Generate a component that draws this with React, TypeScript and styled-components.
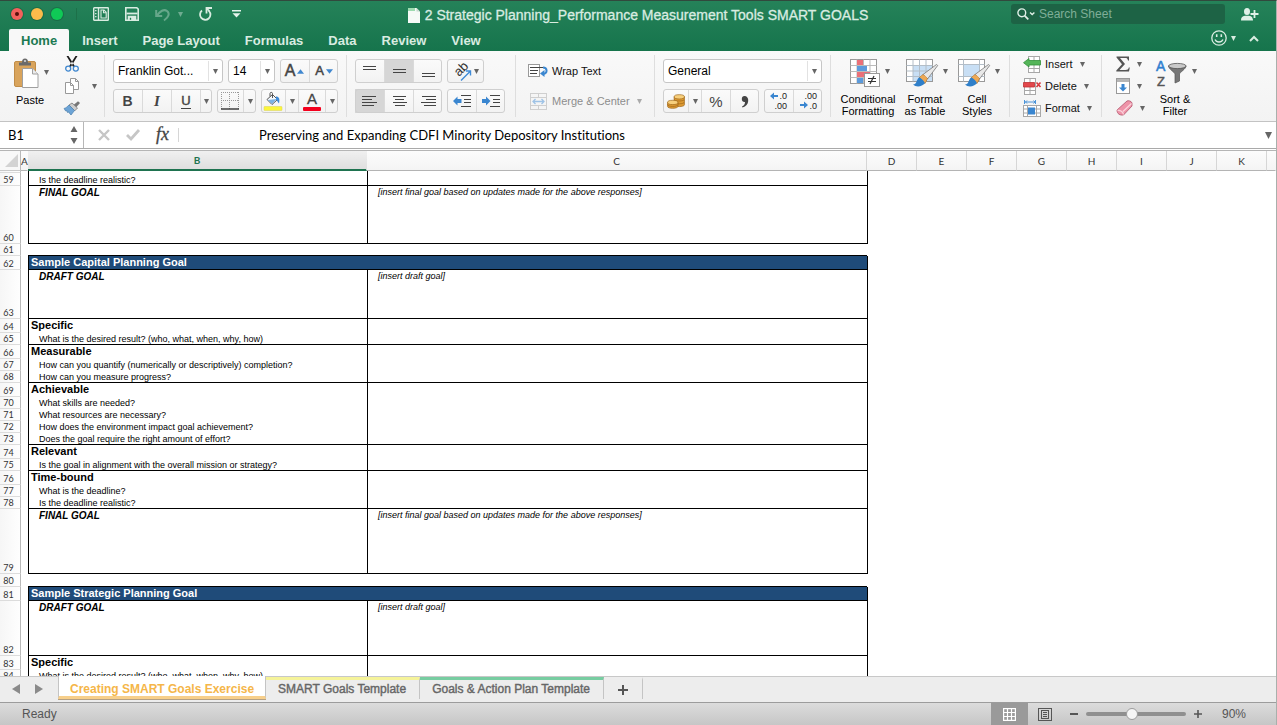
import React from "react";
import styled, { createGlobalStyle, css } from "styled-components";

const GlobalStyle = createGlobalStyle`
  *, *::before, *::after { box-sizing: border-box; }
  html, body { margin: 0; padding: 0; overflow: hidden; }
  body { font-family: "Liberation Sans", Arial, sans-serif; font-size: 12px; color: #000; }
  button, input, select { font: inherit; color: inherit; margin: 0; padding: 0; border: 0; background: none; border-radius: 0; outline: none; }
  svg { display: block; flex: none; overflow: visible; }
`;

const Window = styled.div`
  display: flex;
  flex-direction: column;
  height: 100vh;
  border-top: 1px solid #31493d;
  border-right: 1px solid #a9b0ac;
  background: #fff;
`;

/* ---------- title bar ---------- */
const Header = styled.header`
  flex: none;
  background: linear-gradient(#258259, #16744c);
  color: #d9ece1;
`;
const TitleRow = styled.div`
  display: grid;
  grid-template-columns: 1fr auto 1fr;
  align-items: center;
  height: 26px;
`;
const QuickBar = styled.div`
  display: flex;
  align-items: center;
  padding-left: 11px;
`;
const Lights = styled.div`
  display: flex;
  gap: 8px;
  padding-right: 13px;
  margin-right: 16px;
  border-right: 1px solid #1d7049;
`;
const Light = styled.button<{ $color: string }>`
  display: grid;
  place-items: center;
  width: 12px;
  height: 12px;
  border-radius: 50%;
  background: ${(p) => p.$color};
  box-shadow: 0 0 0 1px rgba(0, 60, 30, 0.25);
`;
const QuickButton = styled.button<{ $gap?: number; $dim?: boolean }>`
  display: flex;
  align-items: center;
  gap: 8px;
  margin-right: ${(p) => p.$gap ?? 16}px;
  opacity: ${(p) => (p.$dim ? 0.35 : 1)};
`;
const Title = styled.h1`
  display: flex;
  align-items: center;
  gap: 5px;
  margin: 0;
  padding-top: 2px;
  font-size: 14px;
  line-height: 20px;
  font-weight: 500;
  -webkit-text-stroke: 0.3px currentColor;
  white-space: nowrap;
`;
const TitleEnd = styled.div`
  display: flex;
  align-items: center;
  justify-content: flex-end;
  gap: 16px;
  padding-right: 17px;
`;
const Search = styled.label`
  display: flex;
  align-items: center;
  gap: 4px;
  width: 214px;
  height: 20px;
  padding-left: 6px;
  border-radius: 3px;
  background: #1d6345;
  input { flex: 1; min-width: 0; font-size: 12px; }
  input::placeholder { color: #7fae98; opacity: 1; }
`;
const TabRow = styled.nav`
  display: flex;
  align-items: center;
  justify-content: space-between;
  height: 24px;
  padding: 2px 17px 0 9px;
`;
const TabList = styled.div`
  display: flex;
  gap: 1px;
`;
const RibbonTab = styled.button<{ $active?: boolean }>`
  height: 22px;
  padding: 0 12px;
  font-size: 13px;
  line-height: 23px;
  font-weight: 700;
  ${(p) => p.$active && css`background: #f8f8f8; color: #1c7a52; border-radius: 2px 2px 0 0;`}
`;
const TabEnd = styled.div`
  display: flex;
  align-items: center;
  gap: 13px;
  padding-bottom: 4px;
  button { display: flex; align-items: center; gap: 4px; }
`;

/* ---------- ribbon ---------- */
const Ribbon = styled.section`
  flex: none;
  display: flex;
  height: 71px;
  padding: 4px 0;
  background: linear-gradient(#f9f9f9, #f3f3f3);
  border-bottom: 1px solid #c3c3c3;
`;
const Group = styled.div<{ $w: number; $pad?: number }>`
  display: flex;
  flex: none;
  width: ${(p) => p.$w}px;
  padding-left: ${(p) => p.$pad ?? 8}px;
  border-right: 1px solid #dedede;
  &:last-child { border-right: 0; }
`;
const Rows = styled.div`
  display: flex;
  flex-direction: column;
  justify-content: center;
  gap: 6px;
`;
const Line = styled.div`
  display: flex;
  gap: 5px;
`;
const Stack = styled.div<{ $w?: number }>`
  display: flex;
  flex-direction: column;
  justify-content: space-between;
  width: ${(p) => (p.$w ? `${p.$w}px` : "auto")};
`;
const IconButton = styled.button<{ $off?: boolean }>`
  display: flex;
  align-items: center;
  gap: 4px;
  height: 18px;
  font-size: 11px;
  line-height: 18px;
  white-space: nowrap;
  color: ${(p) => (p.$off ? "#8d8d8d" : "#111")};
  svg:last-child:not(:first-child) { margin-left: 3px; }
`;
const WideButton = styled(IconButton)`
  height: 24px;
`;
const PadIcon = styled.span<{ $w?: number }>`
  display: flex;
  justify-content: center;
  width: ${(p) => p.$w ?? 16}px;
`;
const BigButton = styled.button<{ $w: number }>`
  display: flex;
  flex-direction: column;
  align-items: center;
  justify-content: flex-start;
  width: ${(p) => p.$w}px;
  padding-top: 1px;
  font-size: 11px;
  line-height: 12px;
  white-space: pre-line;
  text-align: center;
`;
const BigArt = styled.span`
  display: flex;
  align-items: flex-end;
  gap: 5px;
  height: 32px;
  margin: 0 0 6px 3px;
  svg:last-child { align-self: center; }
`;
const Segments = styled.div`
  display: flex;
  height: 24px;
  outline: 1px solid #cfcfcf;
  outline-offset: -1px;
  border-radius: 3px;
  background: linear-gradient(#fbfbfb, #f2f2f2);
`;
const Segment = styled.button<{ $w?: number; $on?: boolean }>`
  display: flex;
  align-items: center;
  justify-content: center;
  gap: 2px;
  width: ${(p) => p.$w ?? 29}px;
  font-size: 14px;
  color: #444;
  background: ${(p) => (p.$on ? "#d6d6d6" : "transparent")};
  & + & { border-left: 1px solid #dadada; }
`;
const PickerBox = styled.div<{ $w: number }>`
  display: flex;
  align-items: center;
  width: ${(p) => p.$w}px;
  height: 24px;
  padding-right: 4px;
  border: 1px solid #c6c6c6;
  border-radius: 3px;
  background: #fff;
  select {
    flex: 1;
    min-width: 0;
    height: 20px;
    margin-right: 4px;
    padding-left: 4px;
    appearance: none;
    border-right: 1px solid #e2e2e2;
  }
`;
const PercentText = styled.span`
  font-size: 15px;
`;

/* ---------- formula bar ---------- */
const FormulaBar = styled.section`
  flex: none;
  display: flex;
  align-items: center;
  height: 27px;
  border-bottom: 1px solid #a9a9a9;
  font-family: Lato, "Liberation Sans", sans-serif;
  font-variant-ligatures: none;
`;
const NameBox = styled.div`
  display: flex;
  align-items: center;
  width: 84px;
  height: 100%;
  padding: 0 5px 0 8px;
  border-right: 1px solid #b7b7b7;
  input { flex: 1; min-width: 0; font-size: 13px; }
`;
const FormulaButtons = styled.div`
  display: flex;
  align-items: center;
  gap: 16px;
  width: 95px;
  height: 14px;
  padding-left: 14px;
  border-right: 1px solid #d6d6d6;
`;
const Fx = styled.span`
  font: italic 18px/14px "Liberation Serif", serif;
  color: #444;
  -webkit-text-stroke: 0.3px #444;
`;
const FormulaInput = styled.input`
  flex: 1;
  min-width: 0;
  height: 24px;
  padding: 0 0 1px 80px !important;
  font-size: 13px !important;
  font-variant-ligatures: none;
`;
const Expand = styled.button`
  padding: 0 4px 0 0 !important;
`;

/* ---------- sheet ---------- */
const SheetArea = styled.main`
  flex: 1;
  min-height: 0;
  overflow: hidden;
  border-top: 1px solid #b5b5b5;
  margin-top: 1px;
`;
const Sheet = styled.table`
  width: 100%;
  table-layout: fixed;
  border-collapse: separate;
  border-spacing: 0;
  th, td { padding: 0; }
`;
const ColHead = styled.th<{ $selected?: boolean; $tick?: boolean }>`
  height: 20px;
  font: 400 10px/18px Lato, "Liberation Sans", sans-serif;
  color: #333;
  background: linear-gradient(#fcfcfc, #f4f4f4);
  border-bottom: 1px solid #b4b4b4;
  border-right: 1px solid ${(p) => (p.$tick ? "#d6d6d6" : "transparent")};
  ${(p) => p.$selected && css`
    background: linear-gradient(#f0f0f0, #dfdfdf);
    border-bottom: 2px solid #1f7350;
    color: #1f7350;
    font-weight: 700;
  `}
`;
const Corner = styled.th`
  background: #f8f8f8;
  border-right: 1px solid #b9b9b9;
  border-bottom: 1px solid #c9c9c9;
  svg { margin-left: auto; margin-right: 2px; }
`;
const Row = styled.tr<{ $h: number }>`
  height: ${(p) => p.$h}px;
`;
const RowHead = styled.th`
  vertical-align: bottom;
  font: 400 9px/10px Lato, "Liberation Sans", sans-serif;
  color: #333;
  background: linear-gradient(90deg, #f6f6f6, #fefefe);
  border-right: 1px solid #b9b9b9;
  border-bottom: 1px solid #dcdcdc;
  padding-right: 3px !important;
`;
type Kind = "head" | "goal" | "section" | "question" | "none";
const Cell = styled.td<{ $kind: Kind; $left?: boolean; $rule?: boolean }>`
  vertical-align: top;
  white-space: nowrap;
  border-left: ${(p) => (p.$left ? "1px solid #000" : "0")};
  border-bottom: ${(p) => (p.$rule ? "1px solid #000" : "0")};
  ${(p) => p.$kind === "head" && css`
    padding-left: 2px !important;
    background: #1f4b79;
    color: #fff;
    font: 700 11px/13px "Liberation Sans", Arial, sans-serif;
  `}
  ${(p) => p.$kind === "goal" && css`
    padding-left: 10px !important;
    font: italic 700 10px/14px "Liberation Sans", Arial, sans-serif;
  `}
  ${(p) => p.$kind === "section" && css`
    padding-left: 2px !important;
    font: 700 11px/13px "Liberation Sans", Arial, sans-serif;
  `}
  ${(p) => p.$kind === "question" && css`
    padding-left: 10px !important;
    vertical-align: bottom;
    font: 400 9px/${p.$rule ? 9 : 11}px "Liberation Sans", Arial, sans-serif;
  `}
`;
const Note = styled.em`
  display: block;
  padding-left: 10px;
  font: italic 400 9px/12px "Liberation Sans", Arial, sans-serif;
`;

/* ---------- bottom bars ---------- */
const SheetTabs = styled.nav`
  flex: none;
  display: flex;
  height: 27px;
  background: #ededed;
  border-top: 1px solid #c8c8c8;
  border-bottom: 1px solid #9c9c9c;
`;
const SheetNav = styled.div`
  display: flex;
  align-items: center;
  gap: 15px;
  width: 58px;
  padding: 0 0 2px 12px;
`;
const SheetTab = styled.button<{ $accent?: string; $active?: boolean }>`
  height: 22px;
  padding: 0 13px 0 12px;
  font-size: 12px;
  line-height: 17px;
  font-weight: 400;
  -webkit-text-stroke: 0.4px currentColor;
  color: #666;
  border-top: 3px solid ${(p) => p.$accent ?? "transparent"};
  border-right: 1px solid #c4c4c4;
  white-space: nowrap;
  ${(p) => p.$active && css`
    margin-top: -1px;
    height: 23px;
    color: #f5b649;
    font-weight: 700;
    -webkit-text-stroke: 0;
    background: #fff;
    border-top: 0;
    padding: 5px 11px 0;
    border-left: 1px solid #c4c4c4;
    border-bottom: 3px solid #f7cf8b;
    box-shadow: 0 1px 0 #b5a184;
  `}
`;
const AddSheet = styled(SheetTab)`
  width: 39px;
  display: grid;
  place-items: center;
`;
const StatusBar = styled.footer`
  flex: none;
  display: flex;
  align-items: center;
  height: 22px;
  padding-left: 22px;
  background: linear-gradient(#dcdcdc, #c6c6c6);
  color: #555;
  font-size: 12px;
`;
const StatusEnd = styled.div`
  display: flex;
  align-items: center;
  height: 100%;
  margin-left: auto;
  padding-right: 28px;
`;
const ViewButton = styled.button<{ $on?: boolean }>`
  display: grid;
  place-items: center;
  width: ${(p) => (p.$on ? 37 : 34)}px;
  height: 100%;
  background: ${(p) => (p.$on ? "#9a9a9a" : "transparent")};
`;
const ZoomButton = styled.button`
  display: grid;
  place-items: center;
  width: 24px;
  height: 100%;
`;
const ZoomSlider = styled.input`
  appearance: none;
  width: 100px;
  height: 4px;
  border-radius: 2px;
  background: #8f8f8f;
  &::-webkit-slider-thumb {
    appearance: none;
    width: 12px;
    height: 12px;
    border-radius: 50%;
    background: #f6f6f6;
    border: 1px solid #9c9c9c;
  }
`;
const ZoomValue = styled.output`
  width: 38px;
  padding-left: 12px;
  text-align: left;
`;

/* ---------- icons ---------- */
const Arrow = ({ color = "#666", s = 5 }: { color?: string; s?: number }) => (
  <svg width={s} height={s} viewBox="0 0 5 5"><path d="M0 0h5L2.5 5z" fill={color} /></svg>
);
const TemplateIcon = () => (
  <svg width="16" height="14" viewBox="0 0 16 14" fill="none" stroke="#d9ece1" strokeWidth="1.4">
    <rect x=".7" y=".7" width="14.6" height="12.6" rx=".6" />
    <path d="M2.8 3v1.2M2.8 6v1.2M2.8 9v1.2" />
    <path d="M5.5 1v12" /><path d="M8 3h3l2.200 2.200v5.800H8zM10.500 3v2.700h2.700" strokeWidth="1.1" />
  </svg>
);
const SaveIcon = () => (
  <svg width="14" height="14" viewBox="0 0 14 14" fill="none" stroke="#d9ece1" strokeWidth="1.6">
    <path d="M.8 .8h11l1.4 1.4v11H.8z" /><path d="M1.500 6.500h11" strokeWidth="1.8" />
    <path d="M3.500 13V9.500h7V13" fill="#d9ece1" /><path d="M5.5 10.800v2" stroke="#1f7d54" strokeWidth="1.3" />
  </svg>
);
const UndoIcon = () => (
  <svg width="15" height="13" viewBox="0 0 15 13" fill="none" stroke="#e6f3ec" strokeWidth="2">
    <path d="M1.200 2v6h6M2 7.500C5 3 9 .8 12 3s2 6-3 9.500" />
  </svg>
);
const RedoIcon = () => (
  <svg width="13" height="14" viewBox="0 0 13 14" fill="none" stroke="#d9ece1" strokeWidth="1.8">
    <path d="M3 3.500A5.200 5.200 0 1 0 10 4" /><path d="M7.500 6.500V1h5.500" /><path d="M8 1.500l2.500 3" />
  </svg>
);
const MoreIcon = () => (
  <svg width="9" height="8" viewBox="0 0 9 8" fill="#e6f3ec"><path d="M0 0h9v1.500H0zM.5 3.200h8L4.500 7.500z" /></svg>
);
const FileIcon = () => (
  <svg width="12" height="15" viewBox="0 0 12 15"><path d="M0 0h8.500L12 3.500V15H0z" fill="#f6faf7" /><path d="M0 0h7v3H0z" fill="#9edbb0" /><path d="M8.500 0v3.500H12" fill="#c6d8cd" /></svg>
);
const SearchIcon = () => (
  <svg width="18" height="12" viewBox="0 0 18 12" fill="none" stroke="#e1f0e8" strokeWidth="1.400">
    <circle cx="4.800" cy="4.800" r="3.900" /><path d="M7.600 7.600L11.300 11.300" strokeWidth="1.700" /><path d="M13 4.500l2.200 2 2.200-2" />
  </svg>
);
const ShareIcon = () => (
  <svg width="18" height="13" viewBox="0 0 18 13" fill="#dff0e7">
    <ellipse cx="6" cy="3.600" rx="3" ry="3.500" /><path d="M0 12.500c0-3 1-4 4-4.700h4c3 .7 4 1.700 4 4.700z" />
    <path d="M13.500 1v10M9.500 6h8" stroke="#1f7d54" strokeWidth="3.500" /><path d="M13.500 2v8M9.500 6h8" stroke="#dff0e7" strokeWidth="1.800" />
  </svg>
);
const SmileIcon = () => (
  <svg width="16" height="16" viewBox="0 0 16 16" fill="none" stroke="#d9ece1" strokeWidth="1.300">
    <circle cx="8" cy="8" r="7.200" /><path d="M5.700 4.200v2.700M10.300 4.200v2.700" strokeWidth="1.600" /><path d="M4 9.500c1.500 3.300 6.500 3.300 8 0" />
  </svg>
);
const CollapseIcon = () => (
  <svg width="10" height="7" viewBox="0 0 10 7" fill="none" stroke="#d9ece1" strokeWidth="2"><path d="M1 6l4-4L9 6" /></svg>
);
const PasteIcon = () => (
  <svg width="25" height="30" viewBox="0 0 25 30">
    <rect x=".5" y="3.500" width="21" height="25" rx="1.500" fill="#d9a45c" stroke="#c18d48" />
    <path d="M5 7.500V4.500h3C8 1.500 9 .5 11 .5s3 1 3 4h3v3z" fill="#6b6b6b" /><circle cx="11" cy="3" r="1" fill="#ddd" />
    <path d="M8.500 10.500h10l5.500 5.500v13.500H8.500z" fill="#fff" stroke="#a0a0a0" /><path d="M18.500 10.500V16H24" fill="#ececec" stroke="#a0a0a0" />
  </svg>
);
const CutIcon = () => (
  <svg width="14" height="16" viewBox="0 0 14 16" fill="none">
    <path d="M1.500 0h2L9.800 10 8.300 11.200zM12.500 0h-2L4.200 10 5.700 11.200z" fill="#1c1c1c" />
    <circle cx="3.200" cy="12.600" r="2.500" stroke="#3f87cf" strokeWidth="1.300" /><circle cx="10.800" cy="12.600" r="2.500" stroke="#3f87cf" strokeWidth="1.300" />
  </svg>
);
const CopyIcon = () => (
  <svg width="14" height="16" viewBox="0 0 14 16" fill="#fff" stroke="#999">
    <path d="M5.500 .5h5l3 3v8h-8z" /><path d="M10.500 .5v3h3" fill="none" /><path d="M.5 4.500h5l3 3v8h-8z" /><path d="M5.500 4.500v3h3" fill="none" />
  </svg>
);
const BrushIcon = () => (
  <svg width="16" height="14" viewBox="0 0 16 14">
    <path d="M9.500 4L14 .3 16 2 12 6.500z" fill="#777" /><path d="M5 4l3-2L13.500 7l-3 3z" fill="#ccc" stroke="#777" strokeWidth=".8" />
    <path d="M0 7.500C2 7 3.500 5.500 5 4l5.500 5.500L7 14c-1-1-1.500-1.500-2-3l-1.500.5L3.200 10 1.700 10z" fill="#6da4d6" stroke="#4b7fae" strokeWidth=".7" />
  </svg>
);
const BorderIcon = () => (
  <svg width="18" height="18" viewBox="0 0 18 18" fill="none" stroke="#999" strokeDasharray="1 1">
    <path d="M.5 0v17M8.500 0v17M17.500 0v17M0 .5h18M0 8.500h18" /><path d="M0 17h18" stroke="#333" strokeWidth="1.400" strokeDasharray="none" />
  </svg>
);
const FillIcon = () => (
  <svg width="18" height="19" viewBox="0 0 18 19">
    <path d="M3 7.500L8.500 2.500 13.500 7.500 8 12.500z" fill="#f4f8fc" stroke="#555" /><path d="M3.800 8l9-1L8 12z" fill="#7db3e4" />
    <path d="M8.500 6V1.500c0-1.500-2.500-1.500-2.500 0V4.500" fill="none" stroke="#555" /><path d="M12 4.500c3 0 4 2 3 7-1.200-1-1.600-3-3-4z" fill="#3f8bd8" />
    <rect y="14.500" width="18" height="4" rx=".5" fill="#fbf63c" stroke="#d9d35a" strokeWidth=".5" />
  </svg>
);
const FontColorArt = styled.span`
  display: grid;
  justify-items: center;
  gap: 1px;
  font: 15px/14px "Liberation Sans", Arial, sans-serif;
  color: #444;
  -webkit-text-stroke: 0.3px #444;
  &::after { content: ""; width: 18px; height: 4px; border-radius: 1px; background: #f3001d; }
`;
const SizeLetter = styled.span<{ $s: number }>`
  font-size: ${(p) => p.$s}px;
  line-height: 20px;
  color: #444;
  -webkit-text-stroke: 0.5px #444;
`;
const Letter = styled.span<{ $i?: boolean; $u?: boolean }>`
  font: ${(p) => (p.$i ? "italic 700 15px/16px 'Liberation Serif', serif" : p.$u ? "400 13px/14px 'Liberation Sans', sans-serif" : "700 14px/16px 'Liberation Sans', sans-serif")};
  border-bottom: ${(p) => (p.$u ? "1px solid #444" : "0")};
  -webkit-text-stroke: ${(p) => (p.$u ? "0.4px #444" : "0")};
`;
const Tri = ({ up }: { up?: boolean }) => (
  <svg width="7" height="5" viewBox="0 0 8 5"><path d={up ? "M0 5L4 0l4 5z" : "M0 0h8L4 5z"} fill="#3f87cf" /></svg>
);
const Bars = ({ rows }: { rows: [number, number, number][] }) => (
  <svg width="17" height="20" viewBox="0 0 17 20" stroke="#444" aria-hidden>
    {rows.map(([y, a, b]) => <path key={y} d={`M${a} ${y + 0.5}H${b}`} />)}
  </svg>
);
const leftBars: [number, number, number][] = [[5, 1, 15], [8, 1, 11], [11, 1, 16], [14, 1, 13]];
const midBars: [number, number, number][] = [[5, 2, 15], [8, 4, 13], [11, 2, 16], [14, 4, 14]];
const rightBars: [number, number, number][] = [[5, 2, 16], [8, 6, 16], [11, 1, 16], [14, 4, 16]];
const AngleIcon = () => (
  <svg width="19" height="18" viewBox="0 0 19 18">
    <text x="0" y="0" transform="translate(6 15) rotate(-45)" fontFamily="Liberation Sans" fontSize="13" fill="#333">ab</text>
    <path d="M8 18.500L17 9.500M13 9h4.500v4.500" fill="none" stroke="#3f8bd8" strokeWidth="1.400" />
  </svg>
);
const IndentIcon = ({ flip }: { flip?: boolean }) => (
  <svg width="18" height="12" viewBox="0 0 18 12">
    <path d={flip ? "M0 4h4V1.500L8.500 6 4 10.500V8H0z" : "M8.500 4h-4V1.500L0 6l4.500 4.500V8h4z"} fill="#3a86d0" />
    <path d="M8 .5h10M11 4.500h7M11 7.500h7M8 11.500h10" stroke="#444" />
  </svg>
);
const WrapIcon = () => (
  <svg width="20" height="14" viewBox="0 0 20 14" fill="none">
    <rect x=".5" y=".5" width="11" height="12" stroke="#999" fill="#fff" /><path d="M2 3.500h14M2 6.500h8M2 9.500h7" stroke="#444" />
    <path d="M15 3.500c4.500 0 5 6 0 6.500" stroke="#3a86d0" strokeWidth="2" /><path d="M12 9.500l4.500-3.500v7z" fill="#3a86d0" />
  </svg>
);
const MergeIcon = () => (
  <svg width="17" height="17" viewBox="0 0 17 17" fill="none" stroke="#cfcfcf">
    <rect x=".5" y=".5" width="16" height="16" /><path d="M.5 4.500h16M.5 12.500h16M8.500 .5v4M8.500 12.500v4" />
    <path d="M3 8.500h11M5.500 6L3 8.500 5.500 11M11.500 6L14 8.500 11.500 11" stroke="#9fc3e6" strokeWidth="1.300" />
  </svg>
);
const CoinsIcon = () => (
  <svg width="18" height="15" viewBox="0 0 19 16" stroke="#9a6417" strokeWidth=".7">
    {[10, 7, 4].map((y) => <path key={y} d={`M7.500 ${y - 1}v2.500c0 2.600 11 2.600 11 0V${y - 1}z`} fill="#dd9a33" />)}
    <ellipse cx="13" cy="3" rx="5.500" ry="2.300" fill="#f7cf7c" />
    {[12, 10].map((y) => <path key={y} d={`M.5 ${y - 1}v2.300c0 2.600 11 2.600 11 0V${y - 1}z`} fill="#dd9a33" />)}
    <ellipse cx="6" cy="9" rx="5.500" ry="2.300" fill="#f7cf7c" />
  </svg>
);
const CommaIcon = () => (
  <svg width="8" height="13" viewBox="0 0 8 13"><path d="M3.300 1C6 1 7.500 3 7.200 6 7 9 5 11.500 1.500 12.500L1 11.500C3 10.500 4 9 4 7 2 7.200 .8 6 .8 4S2 1 3.300 1z" fill="#444" /></svg>
);
const DecimalIcon = ({ less }: { less?: boolean }) => (
  <svg width="19" height="20" viewBox="0 0 19 20" fontFamily="Liberation Sans" fontSize="9" fill="#222">
    {less ? <><text x="18" y="8" textAnchor="end">.00</text><text x="18" y="18" textAnchor="end">.0</text><path d="M1 13h4v-2.500L9 14l-4 3.500V15H1z" fill="#3a86d0" /></>
      : <><text x="18" y="8" textAnchor="end">.0</text><text x="18" y="18" textAnchor="end">.00</text><path d="M9 4H5V1.500L1 5l4 3.500V6h4z" fill="#3a86d0" /></>}
  </svg>
);
const ConditionalIcon = () => (
  <svg width="30" height="28" viewBox="0 0 30 28">
    <rect x=".5" y=".5" width="26" height="24" fill="#fff" stroke="#999" />
    <path d="M7 .5v24M13.500 .5v24M20 .5v24M.5 6.500h26M.5 12.500h26M.5 18.500h26" stroke="#bbb" />
    <path d="M7 1h6v5H7zM7 13h13v5H7z" fill="#ea7078" /><path d="M7 7h10v5H7zM7 19h6v5H7z" fill="#5c9bdc" />
    <rect x="14.500" y="14.500" width="15" height="13" fill="#fff" stroke="#999" /><path d="M18 19.500h8M18 22.500h8M24 17l-4 8" stroke="#333" strokeWidth="1.200" />
  </svg>
);
const TableBrushIcon = ({ plain }: { plain?: boolean }) => (
  <svg width="32" height="28" viewBox="0 0 32 28">
    <rect x=".5" y=".5" width="26" height="22" fill="#fff" stroke="#999" />
    <path d={plain ? "M5.500 5.500h16v12h-16z" : "M7 6h19v16H7z"} fill="#c8dff5" />
    <path d={plain ? "M5.500 .5v22M21.500 .5v22M.5 5.500h26M.5 17.500h26" : "M7 .5v22M13.500 .5v22M20 .5v22M.5 6.500h26M.5 12h26M.5 17.500h26"} stroke="#b3bec8" fill="none" />
    <path d="M17 15.500L30.500 5.500l1.200 1L21.500 20z" fill="#e8e8e8" stroke="#777" strokeWidth=".8" />
    <path d="M13 19l4-3.500 4.500 4-2.500 5z" fill="#eda956" stroke="#a46a25" strokeWidth=".7" />
    <path d="M7 25.500c4 0 3-4.500 6-7 3 .5 6 3 6 5.500-3 4-9 4.500-12 1.500z" fill="#2f7fc9" />
    <path d="M14 18.500c2-3 5-3 7 .5l-2 5c-1-2-3-4-5-5.500z" fill="#eda956" />
  </svg>
);
const RowsIcon = ({ kind }: { kind: "insert" | "delete" | "format" }) => (
  <svg width="18" height="17" viewBox="0 0 18 17" fill="none" stroke="#a8a8a8">
    {kind === "format" ? <>
      <rect x=".5" y="5.500" width="17" height="11" fill="#fff" /><path d="M4.500 5.500v11M13.500 5.500v11M.5 9h17M.5 13h17" />
      <rect x="5" y="7.500" width="7" height="7" fill="#3a86d0" stroke="none" /><path d="M1.500 0v4M12.500 0v4M2 2h10M4 .5L2.500 2 4 3.500M10.500 .5L12 2l-1.500 1.500" stroke="#4c94d8" />
    </> : <>
      <rect x={kind === "insert" ? 5.5 : 1.5} y=".5" width="11" height="16" fill="#fff" /><path d={kind === "insert" ? "M11 .5v16M5.500 12.500h11" : "M7 .5v16M1.500 12.500h11"} />
      {kind === "insert" ? <path d="M17.500 4.500H6V2.500L.5 6.700 6 11V9h11.500z" fill="#55b559" stroke="#34903b" strokeWidth=".8" />
        : <><path d="M.5 4.500h11v4.500H.5z" fill="#e2474b" stroke="#bd3034" strokeWidth=".8" /><path d="M13.500 4.500l4 4.500M17.500 4.500L13.500 9" stroke="#d8383c" strokeWidth="1.600" /></>}
    </>}
  </svg>
);
const SigmaIcon = () => (
  <svg width="14" height="16" viewBox="0 0 14 16"><path d="M.5 .5h12.500v4h-1C11.500 2.500 11 2 9 2H4l5 6-5.500 6H9.500c2 0 2.800-.7 3.300-2.500h1L13 15.500H.3V14.500L6 8.300.5 1.500z" fill="#555" /></svg>
);
const FillDownIcon = () => (
  <svg width="14" height="16" viewBox="0 0 14 16"><rect x=".5" y=".5" width="13" height="15" fill="#fff" stroke="#999" /><path d="M1 1h12v3H1z" fill="#b5b5b5" /><path d="M5.500 6h3v3.500H11L7 13.500 3 9.500h2.500z" fill="#3a86d0" /></svg>
);
const EraserIcon = () => (
  <svg width="17" height="16" viewBox="0 0 17 16" stroke="#b3566c" strokeWidth=".8"><path d="M1 10L11 1c1-.8 4.500 0 5 2v3L7.500 15C4 15.500 1 14 1 10z" fill="#ee93a8" /><path d="M1.500 10.500c2.500-.5 5.500 1 6 4M7 11.500L15.500 3.500" fill="none" stroke="#fbd3dc" strokeWidth="1.300" /></svg>
);
const SortIcon = () => (
  <svg width="31" height="28" viewBox="0 0 31 28">
    <text x="0" y="12" fontFamily="Liberation Sans" fontSize="14" fill="#2f7fd0" stroke="#2f7fd0" strokeWidth=".5">A</text>
    <text x="1" y="27" fontFamily="Liberation Sans" fontSize="13" fill="#555" stroke="#555" strokeWidth=".4">Z</text>
    <path d="M12.500 7c0 3 6 6 6.500 8v9l4.500-2v-7c.5-2 6.500-5 6.500-8z" fill="#777" stroke="#555" strokeWidth=".7" /><ellipse cx="21.300" cy="7" rx="8.800" ry="2.600" fill="#c9c9c9" stroke="#555" strokeWidth=".8" />
  </svg>
);
const CrossIcon = () => (
  <svg width="12" height="12" viewBox="0 0 12 12" stroke="#c6c6c6" strokeWidth="2.400"><path d="M1 1l10 10M11 1L1 11" /></svg>
);
const CheckIcon = () => (
  <svg width="14" height="12" viewBox="0 0 14 12" fill="none" stroke="#c6c6c6" strokeWidth="2.800"><path d="M1 6l4 4L13 1" /></svg>
);
const StepIcon = () => (
  <svg width="8" height="18" viewBox="0 0 8 18" fill="#666"><path d="M.5 6L4 0l3.500 6zM.5 12h7L4 18z" /></svg>
);
const SideArrow = ({ right }: { right?: boolean }) => (
  <svg width="8" height="10" viewBox="0 0 8 10"><path d={right ? "M0 0v10l8-5z" : "M8 0v10L0 5z"} fill="#8a8a8a" /></svg>
);
const PlusIcon = ({ s = 10 }: { s?: number }) => (
  <svg width={s} height={s} viewBox="0 0 10 10" stroke="#555" strokeWidth="2"><path d="M0 5h10M5 0v10" /></svg>
);
const MinusIcon = () => (
  <svg width="8" height="8" viewBox="0 0 8 8" stroke="#555" strokeWidth="2"><path d="M0 4h8" /></svg>
);
const GridIcon = () => (
  <svg width="13" height="13" viewBox="0 0 13 13" fill="none" stroke="#fff" strokeWidth="1.200"><rect x=".6" y=".6" width="11.800" height="11.800" /><path d="M4.500 0v13M8.500 0v13M0 4.500h13M0 8.500h13" /></svg>
);
const PageIcon = () => (
  <svg width="14" height="13" viewBox="0 0 14 13" fill="none" stroke="#555"><rect x=".5" y=".5" width="13" height="12" /><rect x="3.500" y="2.500" width="7" height="8" /><path d="M5 4.500h4M5 6.500h4M5 8.500h4" /></svg>
);

/* ---------- data ---------- */
type RowData = { n: number; h: number; b?: string; c?: string; kind?: Kind; rule?: boolean; open?: boolean };
const rows: RowData[] = [
  { n: 59, h: 13, b: "Is the deadline realistic?", kind: "question", rule: true },
  { n: 60, h: 58, b: "FINAL GOAL", c: "[insert final goal based on updates made for the above responses]", kind: "goal", rule: true },
  { n: 61, h: 12, rule: true, open: true },
  { n: 62, h: 14, b: "Sample Capital Planning Goal", kind: "head", rule: true },
  { n: 63, h: 49, b: "DRAFT GOAL", c: "[insert draft goal]", kind: "goal", rule: true },
  { n: 64, h: 14, b: "Specific", kind: "section" },
  { n: 65, h: 12, b: "What is the desired result? (who, what, when, why, how)", kind: "question", rule: true },
  { n: 66, h: 14, b: "Measurable", kind: "section" },
  { n: 67, h: 12, b: "How can you quantify (numerically or descriptively) completion?", kind: "question" },
  { n: 68, h: 12, b: "How can you measure progress?", kind: "question", rule: true },
  { n: 69, h: 14, b: "Achievable", kind: "section" },
  { n: 70, h: 12, b: "What skills are needed?", kind: "question" },
  { n: 71, h: 12, b: "What resources are necessary?", kind: "question" },
  { n: 72, h: 12, b: "How does the environment impact goal achievement?", kind: "question" },
  { n: 73, h: 12, b: "Does the goal require the right amount of effort?", kind: "question", rule: true },
  { n: 74, h: 14, b: "Relevant", kind: "section" },
  { n: 75, h: 12, b: "Is the goal in alignment with the overall mission or strategy?", kind: "question", rule: true },
  { n: 76, h: 14, b: "Time-bound", kind: "section" },
  { n: 77, h: 12, b: "What is the deadline?", kind: "question" },
  { n: 78, h: 12, b: "Is the deadline realistic?", kind: "question", rule: true },
  { n: 79, h: 65, b: "FINAL GOAL", c: "[insert final goal based on updates made for the above responses]", kind: "goal", rule: true },
  { n: 80, h: 13, rule: true, open: true },
  { n: 81, h: 14, b: "Sample Strategic Planning Goal", kind: "head", rule: true },
  { n: 82, h: 55, b: "DRAFT GOAL", c: "[insert draft goal]", kind: "goal", rule: true },
  { n: 83, h: 14, b: "Specific", kind: "section" },
  { n: 84, h: 12, b: "What is the desired result? (who, what, when, why, how)", kind: "question", rule: true },
];
const columns = ["A", "B", "C", "D", "E", "F", "G", "H", "I", "J", "K"];
const widths = [21, 7, 339, 500, 50, 50, 50, 50, 50, 50, 50, 50];

const Picker = ({ label, value, w }: { label: string; value: string; w: number }) => (
  <PickerBox $w={w}>
    <select aria-label={label} defaultValue={value}><option>{value}</option></select>
    <Arrow />
  </PickerBox>
);

export default function App() {
  return (
    <Window>
      <GlobalStyle />
      <Header>
        <TitleRow>
          <QuickBar>
            <Lights>
              <Light $color="#f4605c" aria-label="Close"><svg width="4" height="4"><circle cx="2" cy="2" r="2" fill="#5c0f0c" /></svg></Light>
              <Light $color="#fcbb4b" aria-label="Minimize" />
              <Light $color="#0fc956" aria-label="Zoom window" />
            </Lights>
            <QuickButton aria-label="Templates"><TemplateIcon /></QuickButton>
            <QuickButton aria-label="Save"><SaveIcon /></QuickButton>
            <QuickButton $dim aria-label="Undo"><UndoIcon /><Arrow color="#fff" /></QuickButton>
            <QuickButton $gap={20} aria-label="Redo"><RedoIcon /></QuickButton>
            <QuickButton aria-label="Customize toolbar"><MoreIcon /></QuickButton>
          </QuickBar>
          <Title><FileIcon />2 Strategic Planning_Performance Measurement Tools SMART GOALS</Title>
          <TitleEnd>
            <Search><SearchIcon /><input type="search" placeholder="Search Sheet" aria-label="Search Sheet" /></Search>
            <button aria-label="Share"><ShareIcon /></button>
          </TitleEnd>
        </TitleRow>
        <TabRow>
          <TabList>
            {["Home", "Insert", "Page Layout", "Formulas", "Data", "Review", "View"].map((t) => (
              <RibbonTab key={t} $active={t === "Home"}>{t}</RibbonTab>
            ))}
          </TabList>
          <TabEnd>
            <button aria-label="Feedback"><SmileIcon /><Arrow color="#d9ece1" /></button>
            <button aria-label="Collapse ribbon"><CollapseIcon /></button>
          </TabEnd>
        </TabRow>
      </Header>

      <Ribbon>
        <Group $w={105} $pad={1}>
          <BigButton $w={58}>
            <BigArt><PasteIcon /><Arrow /></BigArt>
            Paste
          </BigButton>
          <Stack $w={44}>
            <IconButton aria-label="Cut"><PadIcon $w={26}><CutIcon /></PadIcon></IconButton>
            <IconButton aria-label="Copy"><PadIcon $w={26}><CopyIcon /></PadIcon><Arrow /></IconButton>
            <IconButton aria-label="Format painter"><PadIcon $w={26}><BrushIcon /></PadIcon></IconButton>
          </Stack>
        </Group>
        <Group $w={242}>
          <Rows>
            <Line>
              <Picker label="Font" value="Franklin Got..." w={110} />
              <Picker label="Font size" value="14" w={47} />
              <Segments>
                <Segment aria-label="Increase font size"><SizeLetter $s={16}>A</SizeLetter><Tri up /></Segment>
                <Segment aria-label="Decrease font size"><SizeLetter $s={13}>A</SizeLetter><Tri /></Segment>
              </Segments>
            </Line>
            <Line>
              <Segments>
                <Segment aria-label="Bold"><Letter>B</Letter></Segment>
                <Segment aria-label="Italic"><Letter $i>I</Letter></Segment>
                <Segment aria-label="Underline"><Letter $u>U</Letter></Segment>
                <Segment $w={12} aria-label="Underline options"><Arrow /></Segment>
              </Segments>
              <Segments>
                <Segment $w={26} aria-label="Borders"><BorderIcon /></Segment>
                <Segment $w={13} aria-label="Border options"><Arrow /></Segment>
              </Segments>
              <Segments>
                <Segment $w={24} aria-label="Fill color"><FillIcon /></Segment>
                <Segment $w={13} aria-label="Fill options"><Arrow /></Segment>
                <Segment $w={27} aria-label="Font color"><FontColorArt>A</FontColorArt></Segment>
                <Segment $w={13} aria-label="Font color options"><Arrow /></Segment>
              </Segments>
            </Line>
          </Rows>
        </Group>
        <Group $w={169}>
          <Rows>
            <Line>
              <Segments>
                <Segment aria-label="Top"><Bars rows={[[5, 2, 15], [8, 2, 15]]} /></Segment>
                <Segment $on aria-label="Middle"><Bars rows={[[8, 2, 15], [11, 2, 15]]} /></Segment>
                <Segment aria-label="Bottom"><Bars rows={[[12, 2, 15], [15, 2, 15]]} /></Segment>
              </Segments>
              <Segments><Segment $w={37} aria-label="Orientation"><AngleIcon /><Arrow /></Segment></Segments>
            </Line>
            <Line>
              <Segments>
                <Segment $on aria-label="Align left"><Bars rows={leftBars} /></Segment>
                <Segment aria-label="Align center"><Bars rows={midBars} /></Segment>
                <Segment aria-label="Align right"><Bars rows={rightBars} /></Segment>
              </Segments>
              <Segments>
                <Segment aria-label="Decrease indent"><IndentIcon /></Segment>
                <Segment aria-label="Increase indent"><IndentIcon flip /></Segment>
              </Segments>
            </Line>
          </Rows>
        </Group>
        <Group $w={139} $pad={12}>
          <Rows>
            <WideButton><PadIcon $w={20}><WrapIcon /></PadIcon>Wrap Text</WideButton>
            <WideButton $off><PadIcon $w={20}><MergeIcon /></PadIcon>Merge &amp; Center<Arrow color="#aaa" /></WideButton>
          </Rows>
        </Group>
        <Group $w={176}>
          <Rows>
            <Line><Picker label="Number format" value="General" w={159} /></Line>
            <Line>
              <Segments>
                <Segment $w={25} aria-label="Currency"><CoinsIcon /></Segment>
                <Segment $w={13} aria-label="Currency options"><Arrow /></Segment>
                <Segment aria-label="Percent"><PercentText>%</PercentText></Segment>
                <Segment aria-label="Comma"><CommaIcon /></Segment>
              </Segments>
              <Segments>
                <Segment aria-label="Increase decimal"><DecimalIcon /></Segment>
                <Segment aria-label="Decrease decimal"><DecimalIcon less /></Segment>
              </Segments>
            </Line>
          </Rows>
        </Group>
        <Group $w={179} $pad={6}>
          <BigButton $w={62}><BigArt><ConditionalIcon /><Arrow /></BigArt>{"Conditional\nFormatting"}</BigButton>
          <BigButton $w={52}><BigArt><TableBrushIcon /><Arrow /></BigArt>{"Format\nas Table"}</BigButton>
          <BigButton $w={52}><BigArt><TableBrushIcon plain /><Arrow /></BigArt>{"Cell\nStyles"}</BigButton>
        </Group>
        <Group $w={92} $pad={13}>
          <Stack>
            <IconButton><RowsIcon kind="insert" />Insert<Arrow /></IconButton>
            <IconButton><RowsIcon kind="delete" />Delete<Arrow /></IconButton>
            <IconButton><RowsIcon kind="format" />Format<Arrow /></IconButton>
          </Stack>
        </Group>
        <Group $w={110} $pad={14}>
          <Stack $w={34}>
            <IconButton aria-label="AutoSum"><SigmaIcon /><Arrow /></IconButton>
            <IconButton aria-label="Fill"><FillDownIcon /><Arrow /></IconButton>
            <IconButton aria-label="Clear"><EraserIcon /><Arrow /></IconButton>
          </Stack>
          <BigButton $w={50}><BigArt><SortIcon /><Arrow /></BigArt>{"Sort &\nFilter"}</BigButton>
        </Group>
      </Ribbon>

      <FormulaBar>
        <NameBox><input aria-label="Name box" defaultValue="B1" /><StepIcon /></NameBox>
        <FormulaButtons>
          <button aria-label="Cancel"><CrossIcon /></button>
          <button aria-label="Enter"><CheckIcon /></button>
          <button aria-label="Insert function"><Fx>fx</Fx></button>
        </FormulaButtons>
        <FormulaInput aria-label="Formula" defaultValue="Preserving and Expanding CDFI Minority Depository Institutions" />
        <Expand aria-label="Expand formula bar"><Arrow s={7} /></Expand>
      </FormulaBar>

      <SheetArea>
        <Sheet>
          <colgroup>
            {widths.map((w, i) => <col key={i} width={w} />)}
            <col />
          </colgroup>
          <thead>
            <tr>
              <Corner aria-label="Select all"><svg width="13" height="13" viewBox="0 0 13 13"><path d="M13 0v13H0z" fill="#d3d3d3" /></svg></Corner>
              {columns.map((c) => <ColHead key={c} $selected={c === "B"} $tick={c > "B"}>{c}</ColHead>)}
              <ColHead aria-label="L" />
            </tr>
          </thead>
          <tbody>
            <Row $h={2}>
              <RowHead /><td /><Cell $kind="none" $left /><Cell $kind="none" $left /><Cell $kind="none" $left colSpan={9} />
            </Row>
            {rows.map((r) => (
              <Row key={r.n} $h={r.h}>
                <RowHead scope="row">{r.n}</RowHead>
                <td />
                {r.kind === "head" ? (
                  <Cell $kind="head" $left $rule colSpan={2}>{r.b}</Cell>
                ) : (
                  <>
                    <Cell $kind={r.kind ?? "none"} $left={!r.open} $rule={r.rule}>{r.b}</Cell>
                    <Cell $kind="none" $left={!r.open} $rule={r.rule}>{r.c && <Note>{r.c}</Note>}</Cell>
                  </>
                )}
                <Cell $kind="none" $left={!r.open} colSpan={9} />
              </Row>
            ))}
          </tbody>
        </Sheet>
      </SheetArea>

      <SheetTabs>
        <SheetNav>
          <button aria-label="Previous sheet"><SideArrow /></button>
          <button aria-label="Next sheet"><SideArrow right /></button>
        </SheetNav>
        <SheetTab $active>Creating SMART Goals Exercise</SheetTab>
        <SheetTab $accent="#f5f39a">SMART Goals Template</SheetTab>
        <SheetTab $accent="#77cda1">Goals &amp; Action Plan Template</SheetTab>
        <AddSheet aria-label="Add sheet"><PlusIcon /></AddSheet>
      </SheetTabs>
      <StatusBar>
        <span>Ready</span>
        <StatusEnd>
          <ViewButton $on aria-label="Normal view"><GridIcon /></ViewButton>
          <ViewButton aria-label="Page layout view"><PageIcon /></ViewButton>
          <ZoomButton aria-label="Zoom out"><MinusIcon /></ZoomButton>
          <ZoomSlider type="range" aria-label="Zoom" min={0} max={100} defaultValue={45} />
          <ZoomButton aria-label="Zoom in"><PlusIcon s={8} /></ZoomButton>
          <ZoomValue>90%</ZoomValue>
        </StatusEnd>
      </StatusBar>
    </Window>
  );
}
